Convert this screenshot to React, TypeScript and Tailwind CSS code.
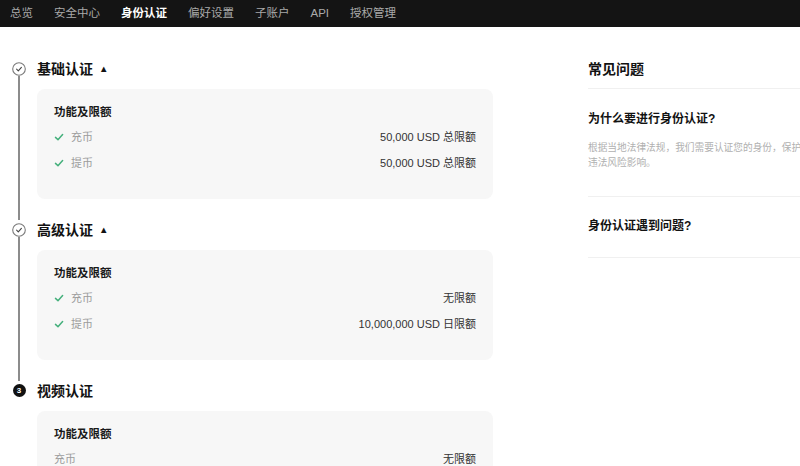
const tabs = ['总览', '安全中心', '身份认证', '偏好设置', '子账户', 'API', '授权管理'];

type Row = { label: string; value: string; check: boolean };

const steps: { title: string; done: boolean; arrow: boolean; rows: Row[] }[] = [
  {
    title: '基础认证',
    done: true,
    arrow: true,
    rows: [
      { label: '充币', value: '50,000 USD 总限额', check: true },
      { label: '提币', value: '50,000 USD 总限额', check: true },
    ],
  },
  {
    title: '高级认证',
    done: true,
    arrow: true,
    rows: [
      { label: '充币', value: '无限额', check: true },
      { label: '提币', value: '10,000,000 USD 日限额', check: true },
    ],
  },
  {
    title: '视频认证',
    done: false,
    arrow: false,
    rows: [
      { label: '充币', value: '无限额', check: false },
      { label: '提币', value: '无限额', check: false },
    ],
  },
];

function DoneIcon() {
  return (
    <svg width="14" height="14" viewBox="0 0 14 14" className="bg-white">
      <circle cx="7" cy="7" r="6.3" fill="white" stroke="#7a7a7a" strokeWidth="1.1" />
      <path d="M4.6 7.2 L6.3 8.8 L9.4 5.3" fill="none" stroke="#444" strokeWidth="1.1" strokeLinecap="round" strokeLinejoin="round" />
    </svg>
  );
}

function Check() {
  return (
    <svg width="10" height="10" viewBox="0 0 10 10">
      <path d="M1.5 5.4 L4 7.8 L8.6 2.6" fill="none" stroke="#45b07c" strokeWidth="1.5" strokeLinecap="round" strokeLinejoin="round" />
    </svg>
  );
}

export default function App() {
  return (
    <div className="w-[800px] h-[466px] overflow-hidden bg-white text-[#121212]" style={{ fontFamily: '"Liberation Sans", "Noto Sans CJK SC", sans-serif' }}>
      <div className="h-[27px] bg-[#141414] flex items-center pl-[10px] gap-[21px] text-[11.5px]">
        {tabs.map(t => (
          <span key={t} className={t === '身份认证' ? 'text-white font-bold' : 'text-[#a9a9a9]'}>{t}</span>
        ))}
      </div>

      <div className="flex pt-[32px]">
        <div className="w-[481px] ml-[12px] shrink-0">
          {steps.map((s, i) => (
            <div key={s.title} className="flex">
              <div className="w-[14px] flex flex-col items-center pt-[3px]">
                {s.done ? (
                  <DoneIcon />
                ) : (
                  <div className="w-[13px] h-[13px] rounded-full bg-[#111] text-white text-[8px] font-bold flex items-center justify-center">3</div>
                )}
                {i < steps.length - 1 && <div className="flex-1 w-[1.5px] bg-[#8c8c8c]" />}
              </div>
              <div className={'flex-1 ml-[11px] ' + (i < steps.length - 1 ? 'pb-[21px]' : '')}>
                <div className="h-[20px] flex items-center gap-[6px] text-[14px] font-bold">
                  {s.title}
                  {s.arrow && <span className="text-[9.5px] leading-none">▲</span>}
                </div>
                <div className="mt-[10px] bg-[#f7f7f7] rounded-[8px] pt-[16px] px-[17px] pb-[23px]">
                  <div className="h-[14px] leading-[14px] text-[11.5px] font-bold text-[#1a1a1a]">功能及限额</div>
                  <div className="mt-[5px]">
                    {s.rows.map(r => (
                      <div key={r.label} className="h-[26px] flex items-center justify-between text-[11px]">
                        <div className="flex items-center gap-[7px] text-[#9c9c9c]">
                          {r.check && <Check />}
                          {r.label}
                        </div>
                        <div className="text-[#333]">{r.value}</div>
                      </div>
                    ))}
                  </div>
                </div>
              </div>
            </div>
          ))}
        </div>

        <div className="ml-[95px] w-[400px] shrink-0">
          <div className="h-[20px] flex items-center text-[14px] font-bold">常见问题</div>
          <div className="mt-[9px] border-b border-[#f0f0f0]" />
          <div className="pt-[21px] pb-[26px] border-b border-[#f0f0f0]">
            <div className="h-[18px] flex items-center text-[12px] font-bold">为什么要进行身份认证?</div>
            <div className="mt-[12px] text-[9.7px] leading-[15px] text-[#b0b0b0] whitespace-nowrap">
              根据当地法律法规，我们需要认证您的身份，保护您的账户及资产安全，免受欺诈及
              <br />
              违法风险影响。
            </div>
          </div>
          <div className="pt-[20px] pb-[22px] border-b border-[#f0f0f0]">
            <div className="h-[18px] flex items-center text-[12px] font-bold">身份认证遇到问题?</div>
          </div>
        </div>
      </div>
    </div>
  );
}
